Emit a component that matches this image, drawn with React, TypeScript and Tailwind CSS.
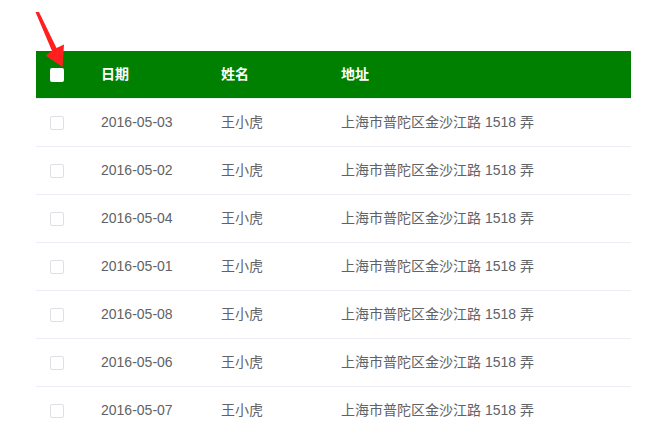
import React from 'react';

const rows = [
  { date: '2016-05-03', name: '王小虎', address: '上海市普陀区金沙江路 1518 弄' },
  { date: '2016-05-02', name: '王小虎', address: '上海市普陀区金沙江路 1518 弄' },
  { date: '2016-05-04', name: '王小虎', address: '上海市普陀区金沙江路 1518 弄' },
  { date: '2016-05-01', name: '王小虎', address: '上海市普陀区金沙江路 1518 弄' },
  { date: '2016-05-08', name: '王小虎', address: '上海市普陀区金沙江路 1518 弄' },
  { date: '2016-05-06', name: '王小虎', address: '上海市普陀区金沙江路 1518 弄' },
  { date: '2016-05-07', name: '王小虎', address: '上海市普陀区金沙江路 1518 弄' },
];

const font = { fontFamily: '"Liberation Sans", "Noto Sans CJK SC", sans-serif' };

export default function App() {
  return (
    <div className="relative w-[655px] h-[430px] bg-white overflow-hidden" style={font}>
      {/* pointer arrow */}
      <svg className="absolute left-0 top-0 z-10" width="80" height="80" viewBox="0 0 80 80">
        <path d="M35.5 12 L39 12 L56.5 48 L64 44.5 L62.5 67 L45.5 55.5 L52 51 Z" fill="#ff1f1f" />
      </svg>

      <div className="pt-[51px] pl-[36px] w-[631px]">
        {/* header */}
        <div className="flex items-center h-[48px] bg-[#008000] border-b border-[#ebeef5] text-white text-[14px] font-bold">
          <div className="w-[55px] flex pl-[14px]">
            <span className="w-[14px] h-[14px] bg-white rounded-[2px]" />
          </div>
          <div className="w-[120px] pl-[10px]">日期</div>
          <div className="w-[120px] pl-[10px]">姓名</div>
          <div className="flex-1 pl-[10px]">地址</div>
        </div>

        {/* body */}
        {rows.map((r, i) => (
          <div key={i} className="flex items-center h-[48px] border-b border-[#ebeef5] text-[14px] text-[#606266]">
            <div className="w-[55px] flex pl-[14px]">
              <span className="w-[14px] h-[14px] bg-white border border-[#dcdfe6] rounded-[2px]" />
            </div>
            <div className="w-[120px] pl-[10px]">{r.date}</div>
            <div className="w-[120px] pl-[10px]">{r.name}</div>
            <div className="flex-1 pl-[10px]">{r.address}</div>
          </div>
        ))}
      </div>
    </div>
  );
}
